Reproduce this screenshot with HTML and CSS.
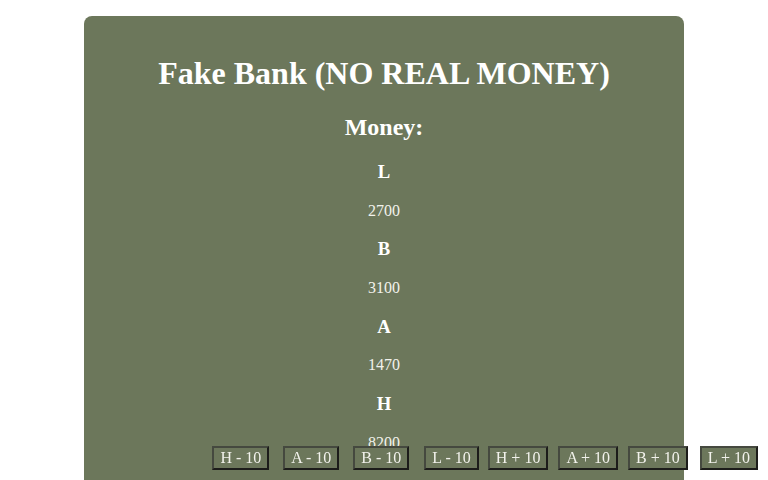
FILE: index.html
```html
<!DOCTYPE html>
<html lang="en">
<head>
<meta charset="utf-8">
<title>Fake Bank</title>
<link rel="stylesheet" href="styles.css">
</head>
<body>
  <main class="bank">
    <h1 class="bank-title">Fake Bank (NO REAL MONEY)</h1>
    <h2 class="bank-subtitle">Money:</h2>
    <section class="account">
      <h3 class="account-name">L</h3>
      <p class="account-balance">2700</p>
    </section>
    <section class="account">
      <h3 class="account-name">B</h3>
      <p class="account-balance">3100</p>
    </section>
    <section class="account">
      <h3 class="account-name">A</h3>
      <p class="account-balance">1470</p>
    </section>
    <section class="account">
      <h3 class="account-name">H</h3>
      <p class="account-balance">8200</p>
    </section>
  </main>

  <div class="controls">
    <button class="btn">H - 10</button>
    <button class="btn gap-14">A - 10</button>
    <button class="btn gap-14">B - 10</button>
    <button class="btn gap-15">L - 10</button>
    <button class="btn gap-9">H + 10</button>
    <button class="btn gap-10">A + 10</button>
    <button class="btn gap-10">B + 10</button>
    <button class="btn gap-12">L + 10</button>
  </div>
</body>
</html>
```

FILE: styles.css
```css
html, body {
  margin: 0;
  padding: 0;
  background: #ffffff;
}

body {
  font-family: "Liberation Serif", "Times New Roman", serif;
  color: #ffffff;
  overflow: hidden;
  height: 480px;
}

.bank {
  width: 600px;
  height: 464px;
  margin: 16px auto 0;
  padding: 18px 0 0;
  background: #6c775b;
  border-radius: 8px 8px 0 0;
  text-align: center;
  box-sizing: border-box;
  overflow: hidden;
}

.bank-title {
  font-size: 32px;
  font-weight: bold;
  margin: 21.44px 0;
}

.bank-subtitle {
  font-size: 24px;
  font-weight: bold;
  margin: 19.92px 0;
}

.account-name {
  font-size: 18.72px;
  font-weight: bold;
  margin: 18.72px 0;
}

.account-balance {
  font-size: 16px;
  margin: 16px 0;
  color: #f2f2ec;
}

/* +/- buttons pinned to the bottom right of the window */
.controls {
  position: fixed;
  right: 10px;
  bottom: 10px;
  display: flex;
  align-items: flex-end;
}

.btn {
  font-family: "Liberation Serif", "Times New Roman", serif;
  font-size: 16px;
  line-height: 18px;
  color: #f2f2ec;
  background: #6c775b;
  padding: 1px 6px 1px;
  border: 2px solid;
  border-color: #45493f #1c1c1a #1c1c1a #45493f;
  border-radius: 0;
  cursor: pointer;
}

.gap-9 { margin-left: 9px; }
.gap-10 { margin-left: 10px; }
.gap-12 { margin-left: 12px; }
.gap-14 { margin-left: 14px; }
.gap-15 { margin-left: 15px; }
```
